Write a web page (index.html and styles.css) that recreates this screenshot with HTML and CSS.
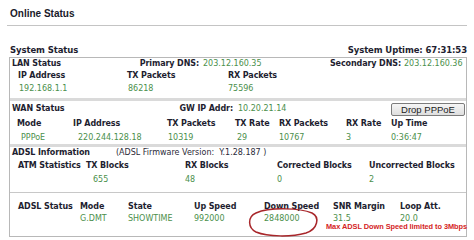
FILE: index.html
```html
<!DOCTYPE html>
<html lang="en">
<head>
    <meta charset="UTF-8">
    <meta name="viewport" content="width=device-width, initial-scale=1.0">
    <title>Online Status</title>
    <link rel="stylesheet" href="styles.css">
</head>
<body>
    <h1 class="title">Online Status</h1>

    <div class="sys">
        <span class="b">System Status</span>
        <span class="b">System Uptime: 67:31:53</span>
    </div>

    <div class="panel">
        <!-- LAN -->
        <div class="sec lan">
            <div class="row lan-top">
                <span class="b pl2">LAN Status</span>
                <span class="b ra">Primary DNS:</span>
                <span class="v pl3">203.12.160.35</span>
                <span class="b ra">Secondary DNS:</span>
                <span class="v pl2">203.12.160.36</span>
            </div>
            <div class="row lan-cols h12">
                <span class="b">IP Address</span>
                <span class="b">TX Packets</span>
                <span class="b">RX Packets</span>
            </div>
            <div class="row lan-cols h13">
                <span class="v pl1">192.168.1.1</span>
                <span class="v pl1">86218</span>
                <span class="v">75596</span>
            </div>
        </div>

        <!-- WAN -->
        <div class="sec wan">
            <div class="row wan-top">
                <span class="b pl2">WAN Status</span>
                <span class="b ra">GW IP Addr:</span>
                <span class="v pl4">10.20.21.14</span>
                <span><button class="btn">Drop PPPoE</button></span>
            </div>
            <div class="row wan-cols h14">
                <span class="b pl3">Mode</span>
                <span class="b pl1">IP Address</span>
                <span class="b pl1">TX Packets</span>
                <span class="b pl1">TX Rate</span>
                <span class="b pl1">RX Packets</span>
                <span class="b pl1">RX Rate</span>
                <span class="b pl1">Up Time</span>
            </div>
            <div class="row wan-cols h13">
                <span class="v pl7">PPPoE</span>
                <span class="v pl6">220.244.128.18</span>
                <span class="v pl2">10319</span>
                <span class="v pl3">29</span>
                <span class="v pl1">10767</span>
                <span class="v pl1">3</span>
                <span class="v pl1">0:36:47</span>
            </div>
        </div>

        <!-- ADSL -->
        <div class="sec adsl">
            <div class="row adsl-top">
                <span class="b pl2">ADSL Information</span>
                <span class="n">(ADSL Firmware Version:&nbsp; Y.1.28.187 )</span>
            </div>
            <div class="row atm-cols h14">
                <span class="b pl1">ATM Statistics</span>
                <span class="b pl1">TX Blocks</span>
                <span class="b pl1">RX Blocks</span>
                <span class="b pl1">Corrected Blocks</span>
                <span class="b pl1">Uncorrected Blocks</span>
            </div>
            <div class="row atm-cols h14">
                <span></span>
                <span class="v pl8">655</span>
                <span class="v pl1">48</span>
                <span class="v pl1">0</span>
                <span class="v pl1">2</span>
            </div>
        </div>

        <div class="sec line">
            <div class="row st-cols h12">
                <span class="b pl1">ADSL Status</span>
                <span class="b pl1">Mode</span>
                <span class="b pl1">State</span>
                <span class="b pl1">Up Speed</span>
                <span class="b pl1">Down Speed</span>
                <span class="b pl1">SNR Margin</span>
                <span class="b pl1">Loop Att.</span>
            </div>
            <div class="row st-cols h10">
                <span></span>
                <span class="v pl1">G.DMT</span>
                <span class="v pl1">SHOWTIME</span>
                <span class="v pl1">992000</span>
                <span class="v pl1">2848000</span>
                <span class="v pl1">31.5</span>
                <span class="v pl1">20.0</span>
            </div>
        </div>
    </div>

    <!-- annotation drawn over the screenshot -->
    <svg class="ring" width="72" height="30" viewBox="0 0 72 30">
        <path d="M8 6 C22 0 52 1 64 6 C72 10 70 22 58 26 C44 30 20 30 8 25 C0 21 -1 10 8 6 Z" fill="none" stroke="#a8262a" stroke-width="1.5"/>
    </svg>
    <div class="note">Max ADSL Down Speed limited to 3Mbps</div>
</body>
</html>
```

FILE: styles.css
```css
body {
    margin: 0;
    font-family: "DejaVu Sans", Verdana, sans-serif;
    font-size: 8px;
    color: #1e1e30;
    background: #fff;
    overflow: hidden;
    position: relative;
}
.title {
    margin: 0 7px;
    padding: 7px 0 0 3px;
    height: 18px;
    font-family: "Liberation Sans", Arial, sans-serif;
    font-size: 10px;
    line-height: 14px;
    font-weight: bold;
    color: #1a1a2a;
    border-bottom: 1px solid #c4c4c4;
}
.sys {
    margin: 18px 7px 0 9px;
    padding-left: 1px;
    display: flex;
    justify-content: space-between;
    font-size: 8.5px;
    line-height: 12px;
}
.panel {
    margin: 1px 7px 0 9px;
    border: 1px solid #b8b8b8;
}
.sec {
    border-bottom: 3px solid #dadada;
}
.sec.lan {
    padding-bottom: 3px;
}
.sec.adsl {
    padding-bottom: 5px;
    border-bottom: 1px solid #c8c8c8;
}
.sec.line {
    padding: 8px 0 13px;
    border-bottom: none;
}
.row {
    display: grid;
    align-items: center;
    line-height: 12px;
    white-space: nowrap;
}
.h10 { height: 10px; }
.h12 { height: 12px; }
.h13 { height: 13px; }
.h14 { height: 14px; }

.lan-top {
    height: 12px;
    grid-template-columns: 110px 80px 105px 97px 64px;
}
.lan-cols {
    padding-left: 8px;
    grid-template-columns: 109px 101px 1fr;
}
.wan-top {
    height: 16px;
    grid-template-columns: 140px 84px 155px 77px;
}
.wan-cols {
    padding-left: 4px;
    grid-template-columns: 58px 94px 68px 44px 67px 45px 76px;
}
.adsl-top {
    height: 12px;
    grid-template-columns: 106px 1fr;
}
.atm-cols {
    padding-left: 7px;
    grid-template-columns: 68px 99px 92px 92px 1fr;
}
.st-cols {
    padding-left: 7px;
    grid-template-columns: 62px 48px 66px 70px 69px 67px 1fr;
}

.b { font-weight: bold; letter-spacing: -0.1px; }
.v { color: #4b8f4b; }
.n { color: #2a2a38; }
.ra { text-align: right; padding-right: 1px; }
.pl1 { padding-left: 1px; }
.pl2 { padding-left: 2px; }
.pl3 { padding-left: 3px; }
.pl4 { padding-left: 4px; }
.pl6 { padding-left: 6px; }
.pl7 { padding-left: 7px; }
.pl8 { padding-left: 8px; }

.btn {
    display: block;
    margin: 1px 0 0 2px;
    width: 74px;
    height: 13px;
    padding: 0;
    font-family: "Liberation Sans", Arial, sans-serif;
    font-size: 9.5px;
    line-height: 11px;
    color: #222;
    background: linear-gradient(#f6f6f6, #dedede);
    border: 1px solid #7c7c7c;
    border-radius: 2px;
}

.ring {
    position: absolute;
    left: 248px;
    top: 207px;
}
.note {
    position: absolute;
    left: 326px;
    top: 222px;
    font-family: "Liberation Sans", Arial, sans-serif;
    font-size: 7.4px;
    line-height: 9px;
    font-weight: bold;
    letter-spacing: -0.05px;
    color: #d42424;
    white-space: nowrap;
}
```
